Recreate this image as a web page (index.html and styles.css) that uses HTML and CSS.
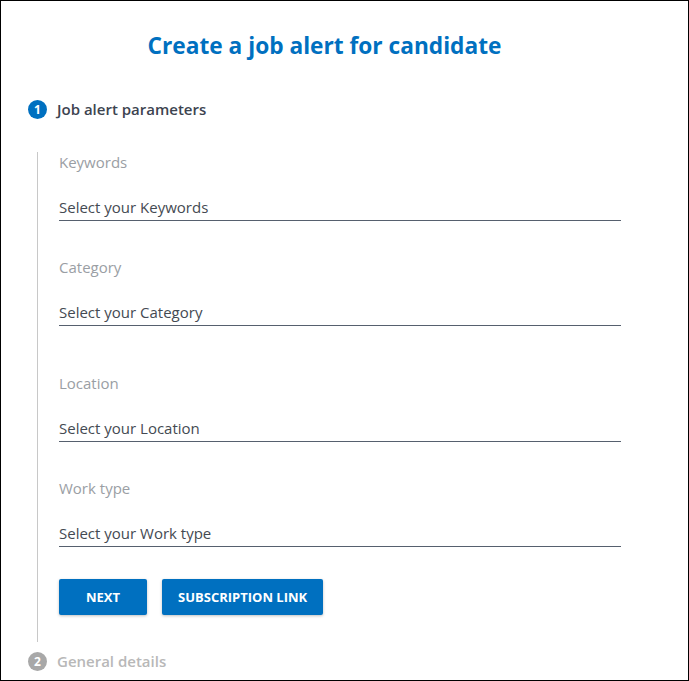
FILE: index.html
```html
<!DOCTYPE html>
<html>
<head>
<meta charset="utf-8">
<link rel="stylesheet" href="styles.css">
</head>
<body>
<div class="frame">
  <h1 class="title">Create a job alert for candidate</h1>
  <div class="step active">
    <span class="step-num">1</span>
    <span class="step-label">Job alert parameters</span>
  </div>
  <div class="step-body">
    <div class="field">
      <div class="field-label">Keywords</div>
      <div class="field-input">Select your Keywords</div>
    </div>
    <div class="field">
      <div class="field-label">Category</div>
      <div class="field-input">Select your Category</div>
    </div>
    <div class="field field-spaced">
      <div class="field-label">Location</div>
      <div class="field-input">Select your Location</div>
    </div>
    <div class="field">
      <div class="field-label">Work type</div>
      <div class="field-input">Select your Work type</div>
    </div>
    <div class="actions">
      <button class="btn">NEXT</button>
      <button class="btn">SUBSCRIPTION LINK</button>
    </div>
  </div>
  <div class="step inactive">
    <span class="step-num">2</span>
    <span class="step-label">General details</span>
  </div>
</div>
</body>
</html>
```
FILE: styles.css
```css
* { box-sizing: border-box; }
html, body { margin: 0; padding: 0; background: #fff; }
body { font-family: "Open Sans", "Noto Sans", sans-serif; }
.frame {
  width: 689px;
  height: 681px;
  border: 1px solid #000;
  overflow: hidden;
}
.title {
  margin: 30px 0 0 0;
  padding-right: 40px;
  height: 30px;
  line-height: 30px;
  font-size: 22.7px;
  font-weight: 700;
  color: #0070c0;
  text-align: center;
}
.step {
  display: flex;
  align-items: center;
  gap: 10px;
  margin-left: 27px;
  height: 20px;
}
.step.active { margin-top: 38px; }
.step-num {
  width: 19px;
  height: 19px;
  border-radius: 50%;
  display: flex;
  align-items: center;
  justify-content: center;
  color: #fff;
  font-size: 12px;
  font-weight: 700;
}
.step-label { font-size: 15px; font-weight: 600; }
.active .step-num { background: #0070c0; }
.active .step-label { color: #3d4450; }
.inactive .step-num { background: #a8a8a8; }
.inactive .step-label { color: #b8b8b8; font-weight: 600; }
.step-body {
  margin: 33px 0 9px 36px;
  border-left: 1px solid #c8c8c8;
  padding: 0 67px 27px 21px;
}
.field + .field { margin-top: 36px; }
.field.field-spaced { margin-top: 47px; }
.field-label {
  font-size: 15px;
  line-height: 20px;
  color: #9a9ea4;
  height: 20px;
}
.field-input {
  margin-top: 25px;
  font-size: 15px;
  line-height: 20px;
  color: #444a52;
  padding-bottom: 3px;
  border-bottom: 1px solid #56606e;
}
.actions {
  display: flex;
  gap: 15px;
  margin-top: 32px;
}
.btn {
  height: 36px;
  padding: 0 16px;
  border: none;
  border-radius: 2px;
  background: #0070c0;
  color: #fff;
  font-family: "Open Sans", "Noto Sans", sans-serif;
  font-size: 13px;
  font-weight: 700;
  box-shadow: 0 1px 3px rgba(0,0,0,0.25);
  min-width: 88px;
}
```
